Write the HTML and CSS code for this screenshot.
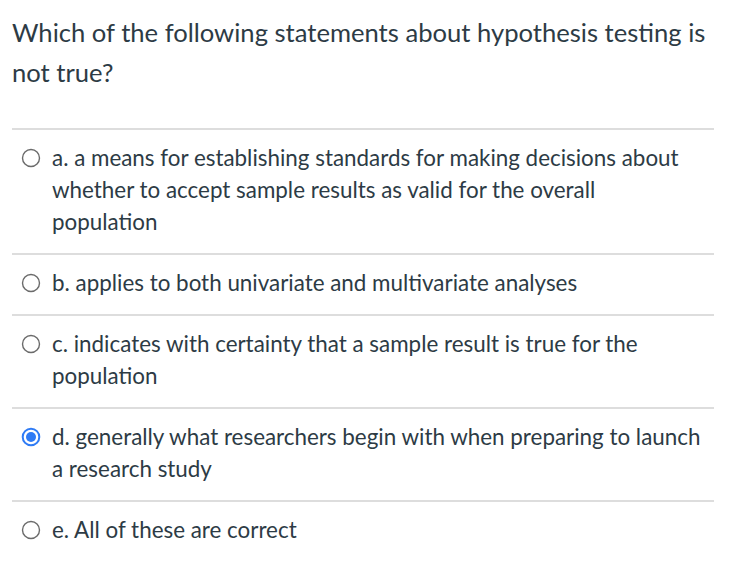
FILE: index.html
```html
<!DOCTYPE html>
<html>
<head>
<meta charset="utf-8">
<link rel="stylesheet" href="styles.css">
</head>
<body>
<div class="question">
  <div class="prompt">Which of the following statements about hypothesis testing is not true?</div>
  <div class="answers">
    <label class="answer">
      <span class="radio"><svg width="20" height="20" viewBox="0 0 20 20"><circle cx="10" cy="10" r="8.5" fill="#fff" stroke="#6b6b6b" stroke-width="1.4"/></svg></span>
      <span class="text">a. a means for establishing standards for making decisions about whether to accept sample results as valid for the overall population</span>
    </label>
    <label class="answer">
      <span class="radio"><svg width="20" height="20" viewBox="0 0 20 20"><circle cx="10" cy="10" r="8.5" fill="#fff" stroke="#6b6b6b" stroke-width="1.4"/></svg></span>
      <span class="text">b. applies to both univariate and multivariate analyses</span>
    </label>
    <label class="answer">
      <span class="radio"><svg width="20" height="20" viewBox="0 0 20 20"><circle cx="10" cy="10" r="8.5" fill="#fff" stroke="#6b6b6b" stroke-width="1.4"/></svg></span>
      <span class="text">c. indicates with certainty that a sample result is true for the population</span>
    </label>
    <label class="answer">
      <span class="radio"><svg width="20" height="20" viewBox="0 0 20 20"><circle cx="10" cy="10" r="8.3" fill="#fff" stroke="#2f7bf5" stroke-width="2"/><circle cx="10" cy="10" r="5" fill="#2f7bf5"/></svg></span>
      <span class="text">d. generally what researchers begin with when preparing to launch a research study</span>
    </label>
    <label class="answer">
      <span class="radio"><svg width="20" height="20" viewBox="0 0 20 20"><circle cx="10" cy="10" r="8.5" fill="#fff" stroke="#6b6b6b" stroke-width="1.4"/></svg></span>
      <span class="text">e. All of these are correct</span>
    </label>
  </div>
</div>
</body>
</html>
```
FILE: styles.css
```css
html, body {
  margin: 0;
  padding: 0;
  background: #fff;
}
body {
  font-family: Lato, "Open Sans", sans-serif;
  color: #2d3b45;
}
.question {
  padding: 12px 18px 0 12px;
}
.prompt {
  font-size: 25.6px;
  line-height: 40px;
}
.answers {
  margin-top: 36px;
}
.answer {
  display: flex;
  align-items: flex-start;
  border-top: 2px solid #dddddd;
  padding: 12px 11px 15px 9px;
  font-size: 22.4px;
  line-height: 32px;
}
.radio {
  flex: none;
  width: 20px;
  height: 32px;
  display: flex;
  align-items: center;
  margin-right: 11px;
}
.radio svg {
  display: block;
}
.text {
  flex: 1;
}
```
